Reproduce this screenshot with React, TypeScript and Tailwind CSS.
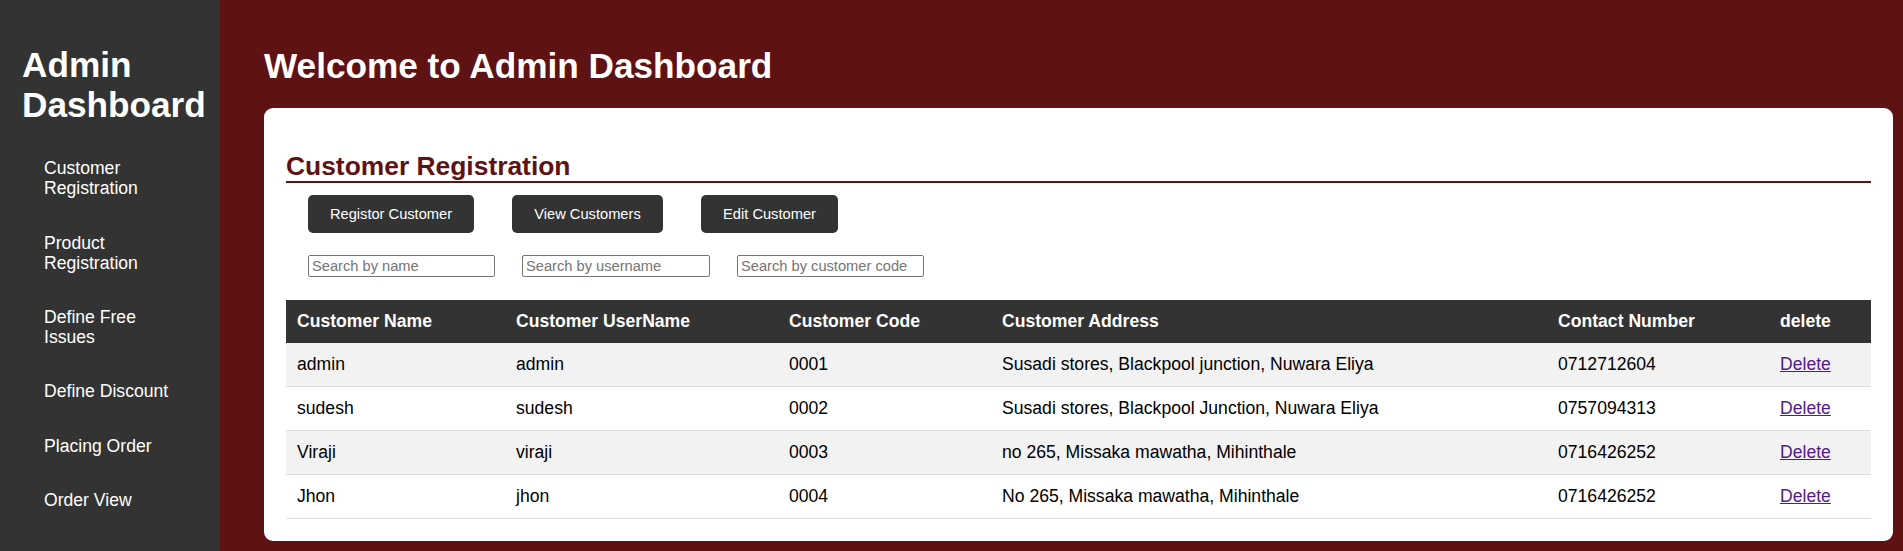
import React from "react"

const navItems = [
  "Customer Registration",
  "Product Registration",
  "Define Free Issues",
  "Define Discount",
  "Placing Order",
  "Order View",
]

const customers = [
  { name: "admin", username: "admin", code: "0001", address: "Susadi stores, Blackpool junction, Nuwara Eliya", phone: "0712712604" },
  { name: "sudesh", username: "sudesh", code: "0002", address: "Susadi stores, Blackpool Junction, Nuwara Eliya", phone: "0757094313" },
  { name: "Viraji", username: "viraji", code: "0003", address: "no 265, Missaka mawatha, Mihinthale", phone: "0716426252" },
  { name: "Jhon", username: "jhon", code: "0004", address: "No 265, Missaka mawatha, Mihinthale", phone: "0716426252" },
]

export default function App() {
  return (
    <div className="flex min-h-screen font-['Liberation_Sans',Arial,sans-serif]">
      {/* Sidebar */}
      <aside className="w-[220px] shrink-0 bg-[#333333] px-[22px] pt-[45px] text-white">
        <h2 className="text-[35.2px] font-bold leading-[40px]">Admin Dashboard</h2>
        <ul className="mt-[16px]">
          {navItems.map((item) => (
            <li key={item} className="px-[22px] py-[17.2px] text-[17.6px] leading-[20px]">
              <a href="#" className="text-white">
                {item}
              </a>
            </li>
          ))}
        </ul>
      </aside>

      {/* Main */}
      <main className="flex-1 bg-[#5f1213] pb-[9px] pl-[44px] pr-[10px] pt-[46px]">
        <h1 className="text-[35.2px] font-bold leading-[40px] text-white">Welcome to Admin Dashboard</h1>

        <div className="mt-[22px] rounded-[9px] bg-white p-[22px]">
          <h2 className="mt-[21px] border-b-2 border-[#5f1213] text-[26.4px] font-bold leading-[30px] text-[#5f1213]">
            Customer Registration
          </h2>

          <div className="mt-[12px] flex gap-[38px] pl-[22px]">
            <button className="h-[38px] w-[166px] rounded-[5px] bg-[#333333] text-[14.67px] text-white">Registor Customer</button>
            <button className="h-[38px] w-[151px] rounded-[5px] bg-[#333333] text-[14.67px] text-white">View Customers</button>
            <button className="h-[38px] w-[137px] rounded-[5px] bg-[#333333] text-[14.67px] text-white">Edit Customer</button>
          </div>

          <div className="mt-[22px] flex gap-[27px] pl-[22px]">
            <input
              placeholder="Search by name"
              className="h-[22px] w-[187px] rounded-[2px] border border-[#767676] px-[3px] text-[14.67px] placeholder:text-[#757575]"
            />
            <input
              placeholder="Search by username"
              className="h-[22px] w-[188px] rounded-[2px] border border-[#767676] px-[3px] text-[14.67px] placeholder:text-[#757575]"
            />
            <input
              placeholder="Search by customer code"
              className="h-[22px] w-[187px] rounded-[2px] border border-[#767676] px-[3px] text-[14.67px] placeholder:text-[#757575]"
            />
          </div>

          <table className="mt-[23px] w-full table-fixed border-separate border-spacing-0 text-[17.6px]">
            <thead>
              <tr className="bg-[#333333] text-white">
                <th className="h-[43px] w-[219px] px-[11px] text-left font-bold">Customer Name</th>
                <th className="h-[43px] w-[273px] px-[11px] text-left font-bold">Customer UserName</th>
                <th className="h-[43px] w-[213px] px-[11px] text-left font-bold">Customer Code</th>
                <th className="h-[43px] w-[556px] px-[11px] text-left font-bold">Customer Address</th>
                <th className="h-[43px] w-[222px] px-[11px] text-left font-bold">Contact Number</th>
                <th className="h-[43px] px-[11px] text-left font-bold">delete</th>
              </tr>
            </thead>
            <tbody>
              {customers.map((c, i) => (
                <tr key={c.code} className={i % 2 === 0 ? "bg-[#f2f2f2]" : "bg-white"}>
                  <td className="h-[44px] border-b border-[#dddddd] px-[11px] text-black">{c.name}</td>
                  <td className="h-[44px] border-b border-[#dddddd] px-[11px] text-black">{c.username}</td>
                  <td className="h-[44px] border-b border-[#dddddd] px-[11px] text-black">{c.code}</td>
                  <td className="h-[44px] border-b border-[#dddddd] px-[11px] text-black">{c.address}</td>
                  <td className="h-[44px] border-b border-[#dddddd] px-[11px] text-black">{c.phone}</td>
                  <td className="h-[44px] border-b border-[#dddddd] px-[11px]">
                    <a href="#" className="text-[#551a8b] underline">
                      Delete
                    </a>
                  </td>
                </tr>
              ))}
            </tbody>
          </table>
        </div>
      </main>
    </div>
  )
}
